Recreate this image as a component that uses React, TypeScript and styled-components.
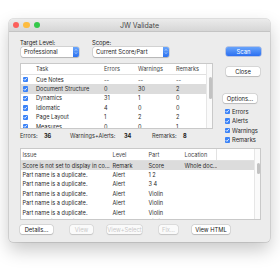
import React from "react";
import styled, { createGlobalStyle } from "styled-components";

const Global = createGlobalStyle`
  html, body { margin: 0; padding: 0; background: #ffffff; }
  body { font-family: "Inter", "Liberation Sans", sans-serif; color: #222; }
  * { box-sizing: border-box; }
`;

const Page = styled.div`
  width: 280px;
  height: 280px;
  padding: 19px 0 0 9px;
  overflow: hidden;
`;

const Window = styled.div`
  width: 261px;
  height: 223px;
  background: #ececec;
  border-radius: 4px;
  box-shadow: 0 8px 18px rgba(0, 0, 0, 0.22), 0 0 0 0.5px rgba(0, 0, 0, 0.2);
  display: flex;
  flex-direction: column;
  overflow: hidden;
`;

const TitleBar = styled.div`
  height: 13px;
  flex-shrink: 0;
  background: linear-gradient(#ebebeb, #d6d6d6);
  border-bottom: 1px solid #c4c4c4;
  display: flex;
  align-items: center;
  position: relative;
  padding-left: 3.5px;
  gap: 4px;
`;

const Light = styled.span<{ $c: string }>`
  width: 6.5px;
  height: 6.5px;
  border-radius: 50%;
  background: ${(p) => p.$c};
`;

const Title = styled.div`
  position: absolute;
  left: 0;
  right: 0;
  text-align: center;
  font-size: 7px;
  color: #4a4a4a;
`;

const Body = styled.div`
  flex: 1;
  padding: 7px 8px 0 11px;
  display: flex;
  flex-direction: column;
`;

const Top = styled.div`
  display: flex;
  gap: 10px;
`;

const LeftCol = styled.div`
  width: 193px;
  display: flex;
  flex-direction: column;
`;

const RightCol = styled.div`
  flex: 1;
  display: flex;
  flex-direction: column;
  align-items: flex-start;
  padding-top: 8px;
`;

const Controls = styled.div`
  display: grid;
  grid-template-columns: 72px 76px;
  row-gap: 1px;
`;

const Label = styled.div`
  font-size: 5.8px;
  color: #222;
  height: 7px;
  line-height: 7px;
`;

const Select = styled.div<{ $w: number }>`
  width: ${(p) => p.$w}px;
  height: 9.5px;
  margin-left: 1px;
  background: #fff;
  border-radius: 2px;
  box-shadow: 0 0 0 0.5px rgba(0, 0, 0, 0.2), 0 0.5px 1px rgba(0, 0, 0, 0.15);
  display: flex;
  align-items: center;
  justify-content: space-between;
  font-size: 5.8px;
  color: #262626;
  padding-left: 3px;
`;

const Stepper = styled.div`
  width: 6.5px;
  height: 9.5px;
  border-radius: 0 2px 2px 0;
  background: linear-gradient(#6aa6fb, #2d72f0);
  display: flex;
  align-items: center;
  justify-content: center;
`;

const TableBox = styled.div<{ $h: number; $mt: number }>`
  height: ${(p) => p.$h}px;
  margin-top: ${(p) => p.$mt}px;
  flex-shrink: 0;
  background: #fff;
  border: 0.5px solid #c9c9c9;
  display: flex;
  overflow: hidden;
`;

const TableInner = styled.div`
  flex: 1;
  display: flex;
  flex-direction: column;
  overflow: hidden;
`;

const Row = styled.div<{ $cols: string; $sel?: boolean; $head?: number }>`
  display: grid;
  grid-template-columns: ${(p) => p.$cols};
  height: ${(p) => p.$head ?? 9.4}px;
  align-items: center;
  flex-shrink: 0;
  background: ${(p) => (p.$sel ? "#dcdcdc" : "transparent")};
  border-bottom: ${(p) => (p.$head ? "0.5px solid #e0e0e0" : "none")};
  font-size: 5.6px;
  color: #2a2a2a;
  white-space: nowrap;
`;

const Cell = styled.div<{ $sep?: boolean; $pl?: number }>`
  padding-left: ${(p) => p.$pl ?? 2}px;
  overflow: hidden;
  height: 100%;
  display: flex;
  align-items: center;
  border-right: ${(p) => (p.$sep ? "0.5px solid #e2e2e2" : "none")};
`;

const HeadCell = styled(Cell)`
  color: #444;
`;

const Check = styled.span`
  width: 5.5px;
  height: 5.5px;
  border-radius: 1px;
  background: #3a82f7;
  display: inline-flex;
  align-items: center;
  justify-content: center;
  flex-shrink: 0;
`;

const Scroll = styled.div<{ $top: number; $h: number }>`
  width: 6px;
  flex-shrink: 0;
  border-left: 0.5px solid #e6e6e6;
  background: #fafafa;
  position: relative;
  &::after {
    content: "";
    position: absolute;
    left: 1.5px;
    top: ${(p) => p.$top}px;
    width: 3px;
    height: ${(p) => p.$h}px;
    border-radius: 2px;
    background: #c2c2c2;
  }
`;

const Stats = styled.div`
  display: flex;
  font-size: 5.6px;
  height: 13px;
  align-items: center;
`;

const StatLabel = styled.span<{ $w: number }>`
  width: ${(p) => p.$w}px;
  color: #333;
`;

const StatVal = styled.span<{ $w: number }>`
  width: ${(p) => p.$w}px;
  font-weight: 700;
  color: #222;
`;

const Button = styled.div<{ $w: number; $primary?: boolean; $disabled?: boolean }>`
  width: ${(p) => p.$w}px;
  height: 9px;
  flex-shrink: 0;
  border-radius: 2px;
  display: flex;
  align-items: center;
  justify-content: center;
  font-size: 5.8px;
  background: ${(p) => (p.$primary ? "linear-gradient(#68a4fb, #2b6ff1)" : "#fff")};
  color: ${(p) => (p.$primary ? "#fff" : p.$disabled ? "#bdbdbd" : "#222")};
  box-shadow: ${(p) =>
    p.$primary
      ? "0 0 0 0.5px rgba(30,80,200,0.5)"
      : "0 0 0 0.5px rgba(0,0,0,0.16), 0 0.5px 1px rgba(0,0,0,0.14)"};
  opacity: ${(p) => (p.$disabled ? 0.75 : 1)};
`;

const Filters = styled.div`
  display: flex;
  flex-direction: column;
  gap: 2px;
  margin-top: 5px;
  padding-left: 1.5px;
`;

const FilterItem = styled.div`
  display: flex;
  align-items: center;
  gap: 2px;
  font-size: 5.8px;
  color: #262626;
  height: 7.5px;
`;

const BottomBar = styled.div`
  display: flex;
  align-items: center;
  height: 19px;
`;

const Tick = () => (
  <svg width="4.5" height="4.5" viewBox="0 0 10 10">
    <path d="M2 5.2 L4.2 7.4 L8.2 2.6" stroke="#fff" strokeWidth="1.8" fill="none" strokeLinecap="round" strokeLinejoin="round" />
  </svg>
);

const Arrows = () => (
  <svg width="4" height="7" viewBox="0 0 8 14">
    <path d="M2 5 L4 3 L6 5 M2 9 L4 11 L6 9" stroke="#fff" strokeWidth="1.3" fill="none" />
  </svg>
);

const taskCols = "13px 68px 34px 38px 33px";
const tasks = [
  ["Cue Notes", "--", "--", "--"],
  ["Document Structure", "0", "30", "2"],
  ["Dynamics", "31", "1", "0"],
  ["Idiomatic", "4", "0", "0"],
  ["Page Layout", "1", "2", "2"],
  ["Measures", "0", "0", "1"],
];

const issueCols = "90px 36px 36px 34px 1fr";
const issues = [
  ["Score is not set to display in co...", "Remark", "Score", "Whole doc..."],
  ["Part name is a duplicate.", "Alert", "1 2", ""],
  ["Part name is a duplicate.", "Alert", "3 4", ""],
  ["Part name is a duplicate.", "Alert", "Violin", ""],
  ["Part name is a duplicate.", "Alert", "Violin", ""],
  ["Part name is a duplicate.", "Alert", "Violin", ""],
  ["Part name is a duplicate.", "Alert", "Violin", ""],
];

export default function App() {
  return (
    <>
      <Global />
      <Page>
        <Window>
          <TitleBar>
            <Light $c="#fc605c" />
            <Light $c="#fdbc40" />
            <Light $c="#34c84a" />
            <Title>JW Validate</Title>
          </TitleBar>
          <Body>
            <Top>
              <LeftCol>
                <Controls>
                  <Label>Target Level:</Label>
                  <Label>Scope:</Label>
                  <Select $w={58}>
                    Professional
                    <Stepper>
                      <Arrows />
                    </Stepper>
                  </Select>
                  <Select $w={76}>
                    Current Score/Part
                    <Stepper>
                      <Arrows />
                    </Stepper>
                  </Select>
                </Controls>
                <TableBox $h={66} $mt={6.5}>
                  <TableInner>
                    <Row $cols={taskCols} $head={11}>
                      <HeadCell />
                      <HeadCell>Task</HeadCell>
                      <HeadCell>Errors</HeadCell>
                      <HeadCell>Warnings</HeadCell>
                      <HeadCell $sep>Remarks</HeadCell>
                    </Row>
                    {tasks.map((t, i) => (
                      <Row key={i} $cols={taskCols} $sel={i === 1}>
                        <Cell $pl={1.5}>
                          <Check>
                            <Tick />
                          </Check>
                        </Cell>
                        <Cell>{t[0]}</Cell>
                        <Cell>{t[1]}</Cell>
                        <Cell>{t[2]}</Cell>
                        <Cell>{t[3]}</Cell>
                      </Row>
                    ))}
                  </TableInner>
                  <Scroll $top={13} $h={22} />
                </TableBox>
                <Stats>
                  <StatLabel $w={24}>Errors:</StatLabel>
                  <StatVal $w={26}>36</StatVal>
                  <StatLabel $w={54}>Warnings+Alerts:</StatLabel>
                  <StatVal $w={28}>34</StatVal>
                  <StatLabel $w={31}>Remarks:</StatLabel>
                  <StatVal $w={10}>8</StatVal>
                </Stats>
              </LeftCol>
              <RightCol>
                <Button $w={35} $primary style={{ marginLeft: 3 }}>
                  Scan
                </Button>
                <Button $w={34} style={{ marginTop: 11, marginLeft: 3 }}>
                  Close
                </Button>
                <Button $w={34} style={{ marginTop: 17.5 }}>
                  Options...
                </Button>
                <Filters>
                  {["Errors", "Alerts", "Warnings", "Remarks"].map((f) => (
                    <FilterItem key={f}>
                      <Check>
                        <Tick />
                      </Check>
                      {f}
                    </FilterItem>
                  ))}
                </Filters>
              </RightCol>
            </Top>
            <TableBox $h={72} $mt={4.5} style={{ width: 241 }}>
              <TableInner>
                <Row $cols={issueCols} $head={12}>
                  <HeadCell $pl={1.5}>Issue</HeadCell>
                  <HeadCell $pl={1.5}>Level</HeadCell>
                  <HeadCell $pl={1.5}>Part</HeadCell>
                  <HeadCell $pl={1.5} $sep>Location</HeadCell>
                  <HeadCell />
                </Row>
                {issues.map((r, i) => (
                  <Row key={i} $cols={issueCols} $sel={i === 0}>
                    <Cell $pl={1.5}>{r[0]}</Cell>
                    <Cell $pl={1.5}>{r[1]}</Cell>
                    <Cell $pl={1.5}>{r[2]}</Cell>
                    <Cell $pl={1.5}>{r[3]}</Cell>
                    <Cell />
                  </Row>
                ))}
              </TableInner>
              <Scroll $top={14} $h={11} />
            </TableBox>
            <BottomBar>
              <Button $w={33}>Details...</Button>
              <Button $w={23} $disabled style={{ marginLeft: 17 }}>
                View
              </Button>
              <Button $w={35} $disabled style={{ marginLeft: 14 }}>
                View+Select
              </Button>
              <Button $w={19} $disabled style={{ marginLeft: 17 }}>
                Fix...
              </Button>
              <Button $w={38} style={{ marginLeft: 14 }}>
                View HTML
              </Button>
            </BottomBar>
          </Body>
        </Window>
      </Page>
    </>
  );
}
